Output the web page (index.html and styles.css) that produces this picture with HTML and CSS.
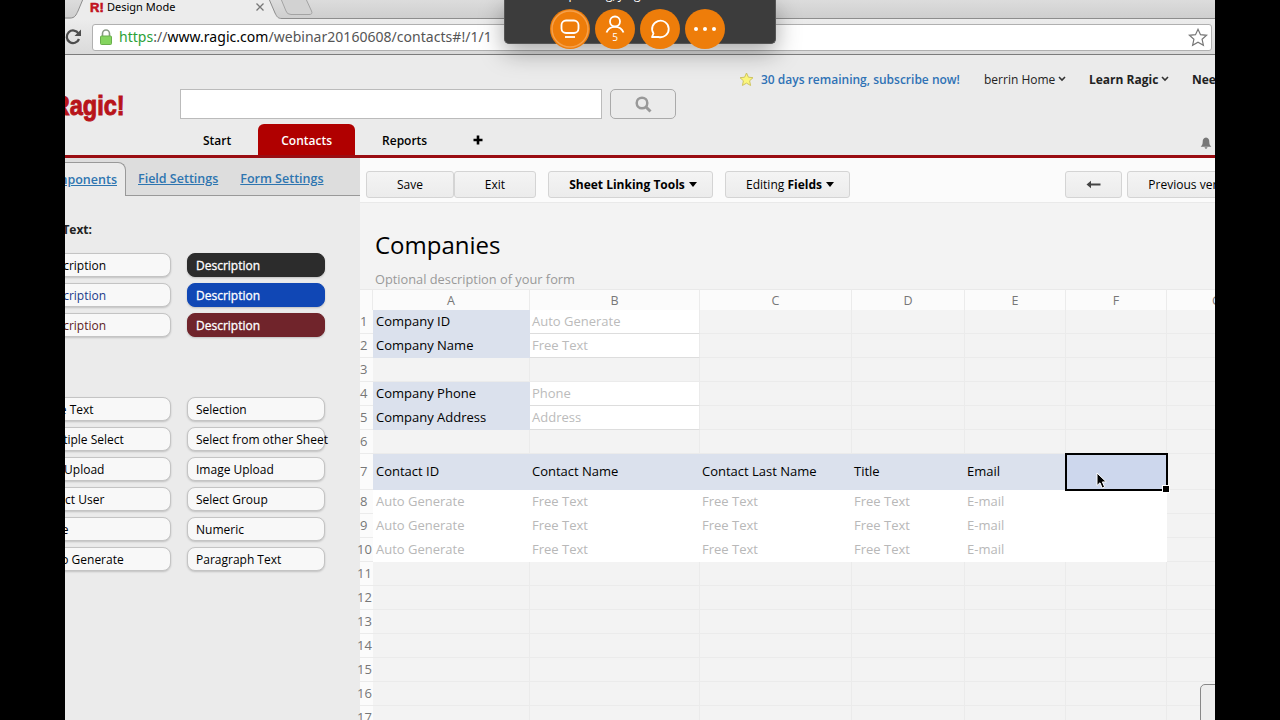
FILE: index.html
```html
<!DOCTYPE html>
<html lang="en">
<head>
  <meta charset="UTF-8">
  <title>Design Mode</title>
  <link rel="stylesheet" href="styles.css">
</head>
<body>

  <div class="screen">

    <!-- Browser chrome -->
    <div class="tabstrip">
      <svg class="tab-shapes" width="1150" height="19" viewBox="0 0 1150 19">
        <path d="M0 18.5H5C10 18.5 11 15 13 11L18 -1H204L210 13C212 17 213 18.500 217 18.500H1150V19H0Z" fill="#ececec"/>
        <path d="M0 18H5C10 18 11 15 13 11L18 -1M204 -1L210 13C212 17 213 18.500 217 18.500H1150" fill="none" stroke="#8d8d8d"/>
        <path d="M216 -1L221 11Q222 14.500 226 14.500H244Q248 14.500 246.500 11L241 -1Z" fill="#d2d2d2" stroke="#a3a3a3"/>
      </svg>
      <span class="favicon">R!</span>
      <span class="tab-title">Design Mode</span>
      <svg class="tab-close" width="8" height="8" viewBox="0 0 8 8"><path d="M0.500 0.500L7.500 7.500M7.500 0.500L0.500 7.500" stroke="#777" stroke-width="1.300"/></svg>
    </div>
    <div class="toolbar">
      <svg width="17" height="18" viewBox="0 0 17 18"><path d="M13.500 5.500A6.300 6.300 0 1 0 14 11" fill="none" stroke="#4d4d4d" stroke-width="2.300"/><path d="M16 1.500V8H9.500Z" fill="#4d4d4d"/></svg>
      <div class="address">
        <svg width="12" height="16" viewBox="0 0 12 16"><path d="M2.500 8V4.500a3.500 3.500 0 0 1 7 0V8" fill="none" stroke="#8a9a86" stroke-width="1.600"/><rect x="0.500" y="7" width="11" height="8.500" rx="1" fill="#84d45e" stroke="#6aae4c"/></svg>
        <span class="url"><span class="secure">https</span>://<b>www.ragic.com</b>/webinar20160608/contacts#!/1/1</span>
        <svg width="20" height="19" viewBox="0 0 20 19"><path d="M10 1.300L12.500 6.700L18.600 7.300L14.100 11.300L15.400 17.300L10 14.200L4.600 17.300L5.900 11.300L1.400 7.300L7.500 6.700Z" fill="#fff" stroke="#777" stroke-width="1.200"/></svg>
      </div>
    </div>

    <!-- Site header -->
    <div class="header">
      <div class="logo"><span>Ragic!</span></div>
      <div class="header-main">
        <div class="search">
          <input type="text" class="search-input">
          <button class="search-btn">
            <svg width="17" height="17" viewBox="0 0 17 17"><circle cx="7" cy="7" r="5.300" fill="none" stroke="#999" stroke-width="2.500"/><path d="M11 11L15.500 15.500" stroke="#999" stroke-width="3"/></svg>
          </button>
        </div>
        <div class="nav">
          <a class="nav-item">Start</a>
          <a class="nav-item active">Contacts</a>
          <a class="nav-item">Reports</a>
          <a class="nav-plus"><svg width="10" height="10" viewBox="0 0 10 10"><path d="M5 0.500V9.500M0.500 5H9.500" stroke="#000" stroke-width="2.600"/></svg></a>
        </div>
      </div>
      <div class="header-side">
        <div class="links">
          <svg width="15" height="15" viewBox="0 0 15 15"><path d="M7.500 1L9.400 5.200L14 5.700L10.600 8.800L11.600 13.500L7.500 11.100L3.400 13.500L4.400 8.800L1 5.700L5.600 5.200Z" fill="#fbf67c" stroke="#cfc562"/></svg>
          <a class="subscribe">30 days remaining, subscribe now!</a>
          <a class="link home">berrin Home<svg width="8" height="6" viewBox="0 0 8 6"><path d="M1 1L4 4L7 1" fill="none" stroke="#333" stroke-width="1.600"/></svg></a>
          <a class="link learn">Learn Ragic<svg width="8" height="6" viewBox="0 0 8 6"><path d="M1 1L4 4L7 1" fill="none" stroke="#333" stroke-width="1.600"/></svg></a>
          <a class="link help">Need Help?</a>
        </div>
        <svg class="bell" width="12" height="12" viewBox="0 0 12 12"><path d="M6 0.500C8.500 0.800 9.300 2.600 9.300 5C9.300 7.500 10 8.500 11.300 9.700H0.700C2 8.500 2.700 7.500 2.700 5C2.700 2.600 3.500 0.800 6 0.500ZM4.500 10.300H7.500Q7 11.800 6 11.800Q5 11.800 4.500 10.300Z" fill="#777"/></svg>
      </div>
    </div>

    <div class="workspace">

      <!-- Left panel -->
      <div class="sidebar">
        <div class="side-tabs">
          <a class="side-tab current">Components</a>
          <a class="side-tab field">Field Settings</a>
          <a class="side-tab form">Form Settings</a>
        </div>
        <h3 class="side-title">Static Text:</h3>
        <div class="pieces">
          <div class="piece">Description</div>
          <div class="piece dark">Description</div>
          <div class="piece blue-text">Description</div>
          <div class="piece blue">Description</div>
          <div class="piece red-text">Description</div>
          <div class="piece red">Description</div>
        </div>
        <div class="pieces fields">
          <div class="piece">Free Text</div>
          <div class="piece">Selection</div>
          <div class="piece">Multiple Select</div>
          <div class="piece">Select from other Sheet</div>
          <div class="piece">File Upload</div>
          <div class="piece">Image Upload</div>
          <div class="piece">Select User</div>
          <div class="piece">Select Group</div>
          <div class="piece">Date</div>
          <div class="piece">Numeric</div>
          <div class="piece">Auto Generate</div>
          <div class="piece">Paragraph Text</div>
        </div>
      </div>

      <!-- Form designer -->
      <div class="designer">
        <div class="actions">
          <button class="btn save">Save</button>
          <button class="btn exit">Exit</button>
          <button class="btn linking"><b>Sheet Linking Tools</b><i class="caret"></i></button>
          <button class="btn editing">Editing&nbsp;<b>Fields</b><i class="caret"></i></button>
          <button class="btn back"><svg width="15" height="9" viewBox="0 0 15 9"><path d="M2 4.500H14.500" stroke="#444" stroke-width="2"/><path d="M0.500 4.500L5 0.800V8.200Z" fill="#444"/></svg></button>
          <button class="btn version">Previous version</button>
        </div>
        <h1 class="form-title">Companies</h1>
        <div class="form-desc">Optional description of your form</div>

        <table class="sheet">
          <colgroup>
            <col class="col-num"><col class="col-a"><col class="col-b"><col class="col-c"><col class="col-d"><col class="col-e"><col class="col-f"><col class="col-g">
          </colgroup>
          <tr class="letters"><th></th><th>A</th><th>B</th><th>C</th><th>D</th><th>E</th><th>F</th><th>G</th></tr>
          <tr><th>1</th><td class="label">Company ID</td><td class="value">Auto Generate</td><td></td><td></td><td></td><td></td><td></td></tr>
          <tr><th>2</th><td class="label">Company Name</td><td class="value">Free Text</td><td></td><td></td><td></td><td></td><td></td></tr>
          <tr><th>3</th><td></td><td></td><td></td><td></td><td></td><td></td><td></td></tr>
          <tr><th>4</th><td class="label">Company Phone</td><td class="value">Phone</td><td></td><td></td><td></td><td></td><td></td></tr>
          <tr><th>5</th><td class="label">Company Address</td><td class="value">Address</td><td></td><td></td><td></td><td></td><td></td></tr>
          <tr><th>6</th><td></td><td></td><td></td><td></td><td></td><td></td><td></td></tr>
          <tr class="heads"><th>7</th><td class="label">Contact ID</td><td class="label">Contact Name</td><td class="label">Contact Last Name</td><td class="label">Title</td><td class="label">Email</td><td class="selected"><span class="outline"></span><svg class="cursor" width="12" height="18" viewBox="0 0 12 18"><path d="M1 1V13.500L4 10.800L6.200 16L8.600 15L6.400 9.900H10.300Z" fill="#000" stroke="#fff"/></svg></td><td></td></tr>
          <tr class="sub"><th>8</th><td>Auto Generate</td><td>Free Text</td><td>Free Text</td><td>Free Text</td><td>E-mail</td><td></td><td class="blank"></td></tr>
          <tr class="sub"><th>9</th><td>Auto Generate</td><td>Free Text</td><td>Free Text</td><td>Free Text</td><td>E-mail</td><td></td><td class="blank"></td></tr>
          <tr class="sub wide"><th>10</th><td>Auto Generate</td><td>Free Text</td><td>Free Text</td><td>Free Text</td><td>E-mail</td><td></td><td class="blank"></td></tr>
          <tr class="wide"><th>11</th><td></td><td></td><td></td><td></td><td></td><td></td><td></td></tr>
          <tr class="wide"><th>12</th><td></td><td></td><td></td><td></td><td></td><td></td><td></td></tr>
          <tr class="wide"><th>13</th><td></td><td></td><td></td><td></td><td></td><td></td><td></td></tr>
          <tr class="wide"><th>14</th><td></td><td></td><td></td><td></td><td></td><td></td><td></td></tr>
          <tr class="wide"><th>15</th><td></td><td></td><td></td><td></td><td></td><td></td><td></td></tr>
          <tr class="wide"><th>16</th><td></td><td></td><td></td><td></td><td></td><td></td><td></td></tr>
          <tr class="wide"><th>17</th><td></td><td></td><td></td><td></td><td></td><td></td><td></td></tr>
        </table>
      </div>
    </div>

    <!-- Meeting controls -->
    <div class="meeting">
      <div class="meeting-title">Speaking, Jorg</div>
      <div class="meeting-buttons">
        <div class="round"><svg width="40" height="40" viewBox="0 0 40 40"><circle cx="20" cy="20" r="18" fill="none" stroke="#f6a04a" stroke-width="1.500"/><rect x="11.500" y="11.500" width="17" height="12.500" rx="4.500" fill="none" stroke="#fff" stroke-width="1.800"/><path d="M15 28H25" stroke="#fff" stroke-width="1.800"/></svg></div>
        <div class="round"><svg width="40" height="40" viewBox="0 0 40 40"><circle cx="20" cy="12.500" r="5" fill="none" stroke="#fff" stroke-width="1.800"/><path d="M11.500 23.500C13 19.500 16 17.800 20 17.800C24 17.800 27 19.500 28.500 23.500" fill="none" stroke="#fff" stroke-width="1.800"/></svg><span class="count">5</span></div>
        <div class="round"><svg width="40" height="40" viewBox="0 0 40 40"><path d="M12 28L13.500 24.500A8.300 8.300 0 1 1 18.500 28Z" fill="none" stroke="#fff" stroke-width="1.800" stroke-linejoin="round"/></svg></div>
        <div class="round"><svg width="40" height="40" viewBox="0 0 40 40"><circle cx="11" cy="20" r="2" fill="#fff"/><circle cx="20" cy="20" r="2" fill="#fff"/><circle cx="29" cy="20" r="2" fill="#fff"/></svg></div>
      </div>
    </div>

    <div class="corner-box"></div>
  </div>

</body>
</html>
```

FILE: styles.css
```css
* {
  box-sizing: border-box;
}

body {
  margin: 0;
  background: #000;
  font-family: "Open Sans", "Noto Sans", sans-serif;
  font-size: 13px;
  color: #000;
}

svg {
  display: block;
  flex: none;
}

button {
  font-family: inherit;
  font-size: inherit;
  padding: 0;
}

.screen {
  position: relative;
  width: 1150px;
  height: 720px;
  margin: 0 auto;
  overflow: hidden;
  background: #ebebeb;
  white-space: nowrap;
}

/* browser */
.tabstrip {
  position: relative;
  display: flex;
  align-items: center;
  height: 19px;
  padding: 0 0 5px 25px;
  background: linear-gradient(#dcdcdc, #cecece);
  font-family: "Noto Sans", sans-serif;
  font-size: 11px;
}

.tab-shapes {
  position: absolute;
  left: 0;
  top: 0;
}

.favicon {
  position: relative;
  width: 17px;
  font-family: "Liberation Sans", sans-serif;
  font-size: 13px;
  font-weight: bold;
  color: #c1121f;
  -webkit-text-stroke: 0.6px #c1121f;
}

.tab-title {
  position: relative;
  width: 149px;
  margin-top: -1px;
}

.tab-close {
  position: relative;
}

.toolbar {
  display: flex;
  align-items: center;
  height: 36px;
  padding-top: 1px;
  background: linear-gradient(#ececec, #dadada);
  border-bottom: 1px solid #7c7c7c;
}

.address {
  display: flex;
  align-items: center;
  width: 1120px;
  height: 27px;
  margin-left: 10px;
  padding: 0 3px 0 7px;
  background: #fff;
  border: 1px solid #b0b0b0;
  border-radius: 3px;
  font-family: "Noto Sans", sans-serif;
  font-size: 14px;
}

.url {
  flex: 1;
  margin-left: 7px;
  letter-spacing: 0.03px;
  line-height: 20px;
  color: #555;
}

.url b {
  font-weight: normal;
  color: #000;
}

.secure {
  color: #2ba137;
}

/* header */
.header {
  display: flex;
  height: 103px;
  border-bottom: 3px solid #9a0d12;
}

.logo {
  display: flex;
  justify-content: flex-end;
  width: 60px;
  margin-right: 55px;
  padding-top: 35px;
  font-family: "Liberation Sans", sans-serif;
  font-size: 28px;
  font-weight: bold;
  line-height: 32px;
  color: #b8141a;
}

.logo span {
  transform: scaleX(0.84);
  transform-origin: right;
  -webkit-text-stroke: 1px #b8141a;
}

.header-main {
  flex: none;
  width: 496px;
  padding-top: 34px;
}

.search {
  display: flex;
  gap: 8px;
}

.search-input {
  width: 422px;
  height: 30px;
  border: 1px solid #bbb;
  background: #fff;
}

.search-btn {
  display: flex;
  align-items: center;
  justify-content: center;
  width: 66px;
  height: 30px;
  background: #ebebeb;
  border: 1px solid #aaa;
  border-radius: 5px;
}

.nav {
  display: flex;
  gap: 4px;
  margin-top: 5px;
  font-size: 12px;
  font-weight: 600;
}

.nav-item,
.nav-plus {
  padding: 0 23px;
  line-height: 34px;
}

.nav-plus {
  padding: 11px 19px;
}

.nav-item.active {
  height: 31px;
  background: #b00000;
  border-radius: 6px 6px 0 0;
  color: #fff;
}

.header-side {
  flex: 1;
  min-width: 0;
  padding: 15px 0 0 63px;
}

.links {
  display: flex;
  align-items: center;
  height: 18px;
  font-size: 12px;
}

.subscribe {
  flex: none;
  width: 223px;
  margin-left: 7px;
  font-weight: 600;
  color: #2f72b5;
}

.link {
  display: flex;
  flex: none;
  align-items: center;
  gap: 3px;
  color: #222;
}

.home {
  width: 105px;
}

.learn {
  width: 103px;
}

.learn,
.help {
  font-weight: 700;
}

.bell {
  margin: 49px 0 0 461px;
}

/* left panel */
.workspace {
  display: flex;
  height: 562px;
}

.sidebar {
  flex: none;
  width: 295px;
  overflow: hidden;
}

.side-tabs {
  display: flex;
  height: 38px;
  background: #ddd;
  border-bottom: 1px solid #999;
  font-size: 12.5px;
  font-weight: 600;
  line-height: 41px;
  color: #2e75b0;
  text-decoration: underline;
}

.side-tab.current {
  display: flex;
  justify-content: flex-end;
  width: 61px;
  height: 34px;
  margin-top: 4px;
  padding-right: 8px;
  background: #ebebeb;
  border: 1px solid #999;
  border-left: 0;
  border-bottom: 0;
  border-radius: 0 8px 0 0;
  line-height: 34px;
  text-decoration: underline;
}

.field {
  margin-left: 12px;
}

.form {
  margin-left: 22px;
}

.side-title {
  display: flex;
  justify-content: flex-end;
  width: 27px;
  margin: 24px 0 0;
  font-size: 12px;
  line-height: 20px;
  color: #222;
}

.pieces {
  display: grid;
  grid-template-columns: 138px 138px;
  grid-auto-rows: 24px;
  gap: 6px 16px;
  margin: 13px 0 0 -32px;
}

.fields {
  margin-top: 60px;
}

.piece {
  padding-left: 8px;
  background: #f8f8f8;
  border: 1px solid #c4c4c4;
  border-radius: 8px;
  box-shadow: 0 1px 2px rgba(0,0,0,0.18);
  font-size: 12px;
  line-height: 24px;
}

.blue-text {
  color: #1b3a8a;
}

.red-text {
  color: #5c2126;
}

.dark,
.blue,
.red {
  color: #fff;
  -webkit-text-stroke: 0.3px #fff;
}

.dark {
  background: #2c2c2c;
  border-color: #2c2c2c;
}

.blue {
  background: #1047b5;
  border-color: #1047b5;
}

.red {
  background: #70242b;
  border-color: #70242b;
}

/* designer */
.designer {
  flex: none;
  width: 907px;
  background: #f3f3f3;
}

.actions {
  display: flex;
  align-items: center;
  height: 45px;
  padding: 8px 0 0 6px;
  background: #fbfbfb;
  border-bottom: 1px solid #e9e9e9;
}

.btn {
  display: flex;
  align-items: center;
  justify-content: center;
  height: 27px;
  padding-top: 1px;
  background: linear-gradient(#f4f4f4, #ececec);
  border: 1px solid #d4d4d4;
  border-radius: 3px;
  font-size: 12px;
  color: #000;
}

.btn b {
  font-weight: 700;
}

.caret {
  margin-left: 4px;
  border: 4px solid transparent;
  border-top: 5px solid #000;
  border-bottom: 0;
}

.save {
  width: 88px;
}

.exit {
  width: 82px;
}

.linking {
  width: 165px;
  margin-left: 12px;
  padding-left: 5px;
}

.editing {
  width: 125px;
  margin-left: 12px;
  padding-left: 5px;
}

.back {
  width: 57px;
  margin-left: 215px;
}

.version {
  width: 135px;
  margin-left: 5px;
}

.form-title {
  margin: 24px 0 0 15px;
  font-size: 24px;
  font-weight: normal;
  line-height: 36px;
}

.form-desc {
  margin: 6px 0 0 15px;
  font-size: 12.8px;
  line-height: 20px;
  color: #999;
}

.sheet {
  width: 907px;
  table-layout: fixed;
  border-collapse: separate;
  border-spacing: 0;
}

.col-num { width: 13px; }
.col-a { width: 157px; }
.col-b { width: 170px; }
.col-c { width: 152px; }
.col-d { width: 113px; }
.col-e { width: 101px; }
.col-f { width: 101px; }
.col-g { width: 100px; }

.sheet td,
.sheet th {
  height: 24px;
  padding: 0 0 1px 2px;
  border-right: 1px solid #ebebeb;
  border-bottom: 1px solid #ebebeb;
  font-size: 13px;
  font-weight: normal;
  line-height: 20px;
  text-align: left;
}

.sheet td:nth-child(2) {
  padding-left: 3px;
}

.sheet th {
  padding-left: 0;
  background: #fbfbfb;
  border-right: 0;
  color: #777;
}

/* two digit numbers run under the left panel */
.sheet .wide th {
  text-indent: -3px;
}

.sheet .letters th {
  height: 21px;
  padding: 1px 0 0;
  border-top: 1px solid #e9e9e9;
  border-right: 1px solid #ebebeb;
  border-bottom: 0;
  text-align: center;
  line-height: 19px;
  font-size: 12.5px;
}

.sheet .label {
  background: #dbe1ed;
  border-color: #dbe1ed;
}

.sheet .value {
  background: #fff;
  border-bottom-color: #ddd;
  color: #bbb;
}

.sheet .heads td,
.sheet .heads th {
  height: 36px;
}

.sheet .sub td {
  background: #fff;
  border-color: #fff;
  color: #b8b8b8;
}

.sheet .sub .blank {
  background: #f3f3f3;
  border-color: #ebebeb;
}

.sheet .selected {
  position: relative;
  background: #cdd7ed;
}

/* selection frame with its drag handle */
.outline {
  position: absolute;
  inset: -1px -2px -2px -1px;
  border: 2px solid #000;
}

.outline::after {
  content: "";
  position: absolute;
  right: -4px;
  bottom: -4px;
  width: 6px;
  height: 6px;
  background: #000;
  border: 1px solid #fff;
}

.cursor {
  position: absolute;
  left: 30px;
  top: 18px;
}

/* meeting bar */
.meeting {
  position: absolute;
  left: 439px;
  top: 0;
  width: 272px;
  height: 44px;
  background: #3c3c3c;
  border: 1px solid #555;
  border-top: 0;
  border-radius: 0 0 5px 5px;
  box-shadow: 0 8px 24px rgba(0,0,0,0.35);
}

.meeting-title {
  height: 9px;
  margin-left: 57px;
  font-size: 12px;
  line-height: 16px;
  color: #fff;
  margin-top: -13px;
}

.meeting-buttons {
  display: flex;
  gap: 5px;
  margin: 13px 0 0 45px;
}

.round {
  position: relative;
  width: 40px;
  height: 40px;
  background: #ee7d0a;
  border-radius: 50%;
}

.count {
  position: absolute;
  left: 0;
  top: 22px;
  width: 40px;
  font-size: 10px;
  line-height: 13px;
  text-align: center;
  color: #fff;
}

.corner-box {
  position: absolute;
  left: 1135px;
  top: 684px;
  width: 30px;
  height: 50px;
  background: #eee;
  border: 1px solid #888;
  border-radius: 5px;
}
```
